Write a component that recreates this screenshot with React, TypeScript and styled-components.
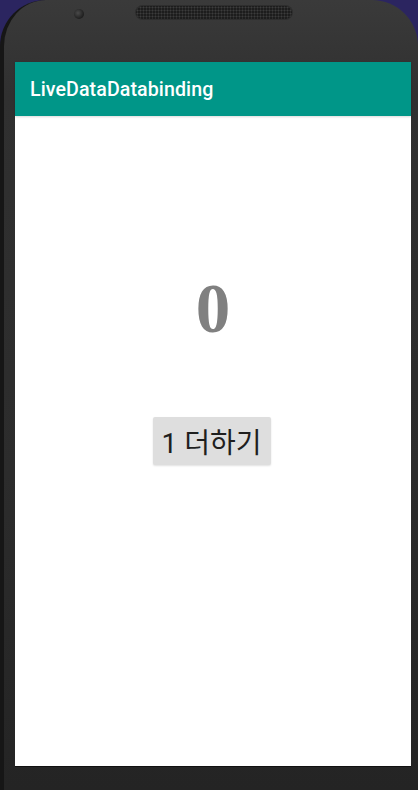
import styled, { createGlobalStyle } from 'styled-components';

const GlobalStyle = createGlobalStyle`
  html, body {
    margin: 0;
    padding: 0;
    background: #232323;
  }
  #root {
    width: 418px;
    height: 790px;
  }
`;

const Backdrop = styled.div`
  width: 418px;
  height: 790px;
  background: #2b2560;
  overflow: hidden;
`;

const Phone = styled.div`
  width: 100%;
  height: 100%;
  box-sizing: border-box;
  display: flex;
  flex-direction: column;
  background: linear-gradient(180deg, #3a3a3a 0%, #303030 12%, #2c2c2c 60%, #242424 100%);
  border-radius: 46px 46px 0 0;
  border-left: 4px solid #161616;
  padding: 0 7px 24px 11px;
`;

const TopBezel = styled.div`
  height: 62px;
  flex-shrink: 0;
  display: flex;
  align-items: flex-start;
  padding-top: 6px;
  box-sizing: border-box;
`;

const Camera = styled.div`
  width: 10px;
  height: 10px;
  border-radius: 50%;
  margin: 3px 0 0 59px;
  background: radial-gradient(circle at 40% 40%, #4a4a4a, #1e1e1e 70%);
`;

const Speaker = styled.div`
  width: 156px;
  height: 13px;
  margin-left: 52px;
  border-radius: 7px;
  background-color: #1d1d1d;
  background-image: radial-gradient(circle, #3c3c3c 0.8px, transparent 1.2px);
  background-size: 3px 3px;
  box-shadow: 0 0 0 1px #2e2e2e;
`;

const Screen = styled.div`
  flex: 1;
  display: flex;
  flex-direction: column;
  background: #ffffff;
  box-shadow: 0 1px 0 #111;
`;

const AppBar = styled.header`
  height: 54px;
  flex-shrink: 0;
  display: flex;
  align-items: center;
  padding-left: 15px;
  background: #009688;
  box-shadow: 0 1px 2px rgba(0, 0, 0, 0.15);
`;

const Title = styled.h1`
  margin: 0;
  font-family: Roboto, 'Noto Sans', sans-serif;
  font-weight: 500;
  font-size: 19.6px;
  color: #ffffff;
  letter-spacing: 0.1px;
`;

const Content = styled.main`
  flex: 1;
  display: flex;
  flex-direction: column;
  align-items: center;
  padding-top: 159px;
`;

const Counter = styled.div`
  font-family: 'Liberation Serif', 'Times New Roman', serif;
  font-weight: 700;
  font-size: 69px;
  line-height: 1;
  color: #808080;
`;

const AddButton = styled.button`
  margin-top: 73px;
  margin-left: -3px;
  width: 118px;
  height: 48px;
  box-sizing: border-box;
  border: none;
  border-radius: 2px;
  background: #dedede;
  box-shadow: 0 1px 2px rgba(0, 0, 0, 0.12);
  font-family: Roboto, 'Noto Sans CJK KR', sans-serif;
  font-size: 28px;
  line-height: 1;
  color: #1f1f1f;
  padding: 5px 0 0;
  display: flex;
  align-items: center;
  justify-content: center;
`;

export default function App() {
  return (
    <>
      <GlobalStyle />
      <Backdrop>
        <Phone>
          <TopBezel>
            <Camera />
            <Speaker />
          </TopBezel>
          <Screen>
            <AppBar>
              <Title>LiveDataDatabinding</Title>
            </AppBar>
            <Content>
              <Counter>0</Counter>
              <AddButton>1 더하기</AddButton>
            </Content>
          </Screen>
        </Phone>
      </Backdrop>
    </>
  );
}
